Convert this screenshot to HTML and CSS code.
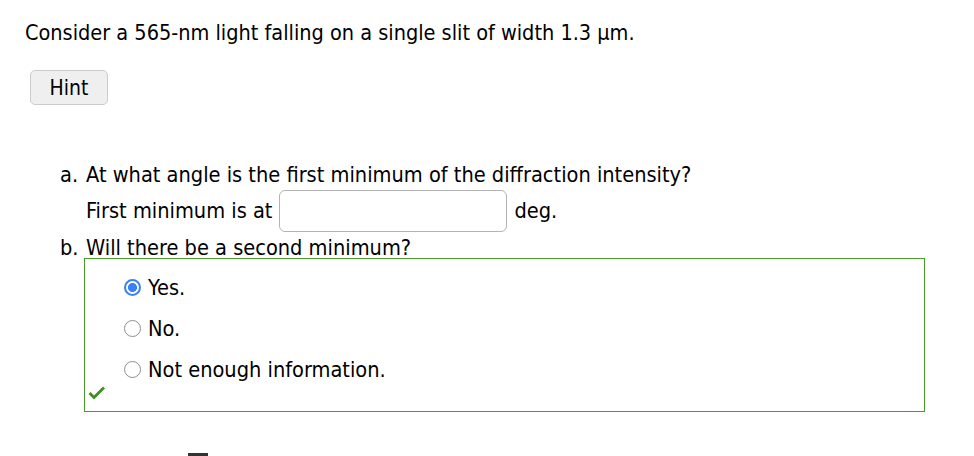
FILE: index.html
```html
<!DOCTYPE html>
<html lang="en">
<head>
  <meta charset="UTF-8">
  <meta name="viewport" content="width=device-width, initial-scale=1.0">
  <title>Single Slit Diffraction</title>
  <link rel="stylesheet" href="styles.css">
</head>
<body>
  <div class="problem">
    <p class="intro">Consider a 565-nm light falling on a single slit of width 1.3 μm.</p>

    <button type="button" class="hint-btn">Hint</button>

    <ol class="parts">
      <li>
        <span class="part-label">a.</span>
        <div class="part-body">
          <div class="part-text">At what angle is the first minimum of the diffraction intensity?</div>
          <div class="answer-row">
            <label for="minAngle">First minimum is at</label>
            <input type="text" id="minAngle">
            <span class="unit">deg.</span>
          </div>
        </div>
      </li>
      <li>
        <span class="part-label">b.</span>
        <div class="part-body">
          <div class="part-text">Will there be a second minimum?</div>
          <div class="choices correct">
            <label class="choice"><input type="radio" name="second" checked> Yes.</label>
            <label class="choice"><input type="radio" name="second"> No.</label>
            <label class="choice"><input type="radio" name="second"> Not enough information.</label>
            <svg class="check" width="18" height="14" viewBox="0 0 18 14">
              <polyline points="1.5,7 6,11.5 16,1.5" fill="none" stroke="#3f8f22" stroke-width="2.8"/>
            </svg>
          </div>
        </div>
      </li>
    </ol>

    <div class="next-bar"></div>
  </div>
</body>
</html>
```

FILE: styles.css
```css
body {
  margin: 0;
  padding: 0;
  font-family: "DejaVu Sans Condensed", "DejaVu Sans", sans-serif;
  font-size: 21.6px;
  color: #000;
  background-color: #ffffff;
}

.problem {
  padding: 19px 0 0 25px;
}

.intro {
  margin: 0;
  line-height: 28px;
  font-size: 21.5px;
}

.hint-btn {
  display: block;
  margin: 23px 0 0 5px;
  width: 78px;
  height: 35px;
  padding: 0;
  font-family: inherit;
  font-size: 21px;
  color: #000;
  background-color: #efefef;
  border: 1px solid #cbcbcb;
  border-radius: 5px;
}

.parts {
  list-style: none;
  margin: 55px 0 0 0;
  padding: 0;
}

.parts li {
  display: flex;
  line-height: 30px;
}

.part-label {
  width: 26px;
  margin-left: 35px;
}

.part-body {
  flex: 1;
}

.answer-row {
  display: flex;
  align-items: center;
  gap: 7px;
  height: 42px;
  margin-bottom: 1px;
}

.answer-row input {
  width: 228px;
  height: 42px;
  box-sizing: border-box;
  border: 1px solid #b3b3b3;
  border-radius: 6px;
  font-size: 18px;
  padding: 0 8px;
}

.choices {
  width: 841px;
  margin: -5px 0 0 -2px;
  height: 154px;
  box-sizing: border-box;
  border: 1px solid #4a9b2a;
  padding: 8px 0 0 39px;
  position: relative;
}

.choice {
  display: flex;
  align-items: center;
  gap: 7px;
  height: 41px;
}

.choice input {
  appearance: none;
  -webkit-appearance: none;
  margin: 0;
  width: 17px;
  height: 17px;
  border: 1px solid #8e8e8e;
  border-radius: 50%;
  background: #fff;
}

.choice input:checked {
  border: 2px solid #3a80f6;
  background: radial-gradient(circle, #3a80f6 0 4.2px, #fff 4.8px);
}

.check {
  position: absolute;
  left: 3px;
  bottom: 11px;
}

.next-bar {
  width: 20px;
  height: 4px;
  margin: 41px 0 0 163px;
  background-color: #333;
}
```
